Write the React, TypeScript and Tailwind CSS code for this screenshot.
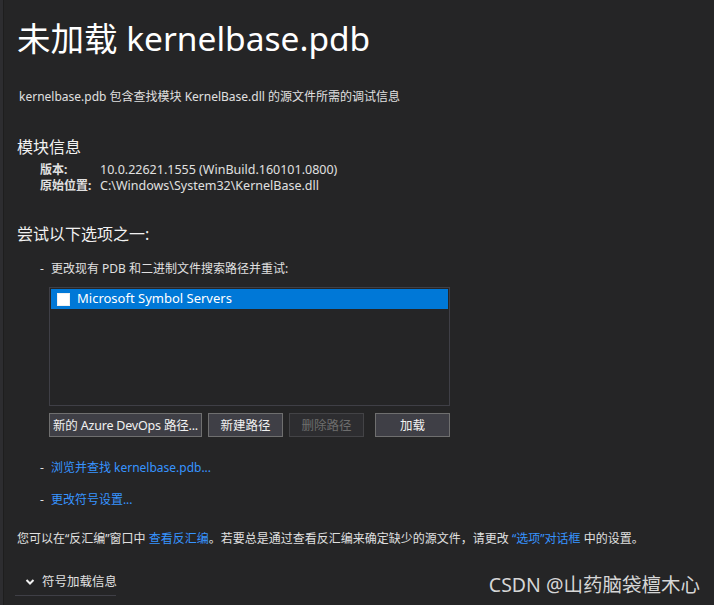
import React from "react";

const font = { fontFamily: '"Segoe UI", "Noto Sans", "Noto Sans CJK SC", sans-serif' };

export default function App() {
  return (
    <div className="w-[714px] h-[605px] overflow-hidden bg-[#252526] text-[#f1f1f1] flex relative" style={font}>
      <div className="w-[3px] bg-[#2d2d30] shrink-0" />
      <div className="w-px bg-[#1e1e1e] shrink-0" />
      <div className="flex-1 flex flex-col pl-[13px]">
        <h1 className="text-[33.5px] leading-[40px] mt-[18px] text-white font-normal whitespace-nowrap">未加载 kernelbase.pdb</h1>
        <p className="text-[12px] leading-[16px] mt-[31px] ml-[2px] text-[#e0e0e0]">kernelbase.pdb 包含查找模块 KernelBase.dll 的源文件所需的调试信息</p>
        <h2 className="text-[16px] leading-[20px] mt-[32px]">模块信息</h2>
        <div className="ml-[23px] mt-[5px] text-[12px] leading-[16px] text-[#e0e0e0]">
          <div className="flex"><span className="w-[60px] font-bold">版本:</span><span className="text-[12.5px]">10.0.22621.1555 (WinBuild.160101.0800)</span></div>
          <div className="flex"><span className="w-[60px] font-bold">原始位置:</span><span className="text-[12.5px]">C:\Windows\System32\KernelBase.dll</span></div>
        </div>
        <h2 className="text-[16px] leading-[20px] mt-[30px]">尝试以下选项之一:</h2>
        <div className="ml-[23px] mt-[17px] text-[12px] leading-[16px] text-[#e0e0e0] flex gap-[7px]"><span>-</span><span>更改现有 PDB 和二进制文件搜索路径并重试:</span></div>
        <div className="ml-[32px] mt-[10px] w-[401px] h-[119px] border border-[#3f3f46] bg-[#252526] p-px">
          <div className="h-[20px] bg-[#0078d7] flex items-center pl-[6px] gap-[7px]">
            <div className="w-[13px] h-[13px] bg-white border border-[#f0f0f0]" />
            <span className="text-[13px] text-white">Microsoft Symbol Servers</span>
          </div>
        </div>
        <div className="ml-[32px] mt-[7px] flex text-[12.5px] leading-[21px] whitespace-nowrap">
          <button className="w-[153px] h-[24px] border border-[#6f6f6f] bg-[#3f3f46] text-[#f1f1f1] tracking-[-0.2px]">新的 Azure DevOps 路径...</button>
          <button className="ml-[6px] w-[75px] h-[24px] border border-[#6f6f6f] bg-[#3f3f46] text-[#f1f1f1]">新建路径</button>
          <button className="ml-[6px] w-[75px] h-[24px] border border-[#434346] bg-[#2d2d30] text-[#6d6d6d]">删除路径</button>
          <button className="ml-[11px] w-[75px] h-[24px] border border-[#6f6f6f] bg-[#3f3f46] text-[#f1f1f1]">加载</button>
        </div>
        <div className="ml-[23px] mt-[23px] text-[12px] leading-[16px] flex gap-[7px]"><span className="text-[#e0e0e0]">-</span><span className="text-[#3794ff]">浏览并查找 kernelbase.pdb...</span></div>
        <div className="ml-[23px] mt-[16px] text-[12px] leading-[16px] flex gap-[7px]"><span className="text-[#e0e0e0]">-</span><span className="text-[#3794ff]">更改符号设置...</span></div>
        <p className="mt-[23px] ml-0 text-[12px] leading-[16px] text-[#e0e0e0] whitespace-nowrap">
          您可以在“反汇编”窗口中 <span className="text-[#3794ff]">查看反汇编</span>。若要总是通过查看反汇编来确定缺少的源文件，请更改 <span className="text-[#3794ff]">“选项”对话框</span> 中的设置。
        </p>
        <div className="mt-[26px] ml-[-2px] w-[101px] border-b border-[#3f3f46] pb-[4px] flex items-center gap-[7px] pl-[10px] text-[12.5px] leading-[18px] text-[#e0e0e0] whitespace-nowrap">
          <svg width="10" height="10" viewBox="0 0 10 10" className="shrink-0"><path d="M1.5 3 L5 6.5 L8.5 3" stroke="#f1f1f1" strokeWidth="2" fill="none" /></svg>
          <span>符号加载信息</span>
        </div>
      </div>
      <div className="absolute right-[14px] bottom-[7px] text-[19.5px] leading-[26px] text-[#d6d6d6] whitespace-nowrap">CSDN @山药脑袋檀木心</div>
    </div>
  );
}
